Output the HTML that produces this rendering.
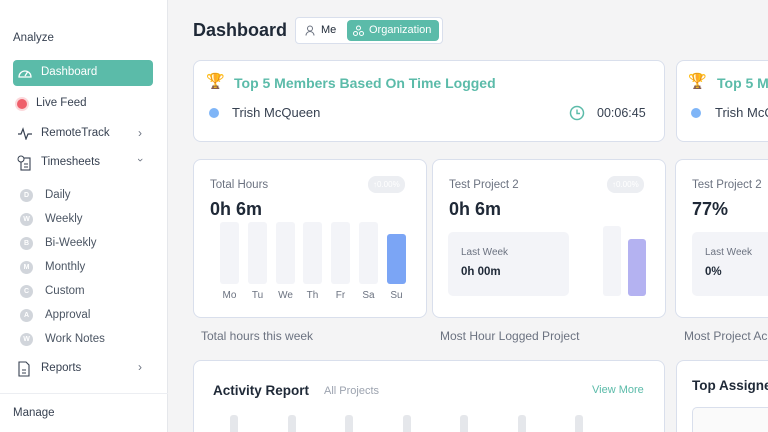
<!DOCTYPE html>
<html style="overflow:hidden;width:768px;height:432px"><head><meta charset="utf-8"><style>
*{box-sizing:border-box;margin:0;padding:0}
html,body{overflow:hidden}
body{width:768px;height:432px;background:#f4f4f5;font-family:"Liberation Sans",sans-serif;position:relative;color:#1f2937}
.abs{position:absolute;white-space:nowrap}
.sb{left:0;top:0;width:168px;height:432px;background:#fff;border-right:1px solid #e5e7eb}
.sec{font-size:11.5px;color:#374151;left:13px}
.item{left:41px;font-size:11.5px;color:#374151}
.sub{left:45px;font-size:11.5px;color:#4b5563}
.dot{left:20px;width:13px;height:13px;border-radius:50%;background:#d1d5db;color:#fff;font-size:7px;text-align:center;line-height:13px;font-weight:bold}
.card{background:#fff;border:1px solid #d9dfec;border-radius:8px}
.bar{width:19px;background:#f3f4f8;border-radius:3px;top:222px;height:62px}
.day{font-size:10px;color:#6b7280;top:290px;width:19px;text-align:center}
.pill{background:#eceef2;border-radius:8px;color:#fff;font-size:8px;padding:4px 5px}
</style></head><body>
<div class="abs sb"></div>
<div class="abs sec" style="top:32px">Analyze</div>
<div class="abs" style="left:13px;top:60px;width:140px;height:26px;background:#5bbba9;border-radius:4px"></div>
<svg class="abs" style="left:17px;top:66px" width="16" height="13" viewBox="0 0 16 13"><path d="M2 11A6 6 0 1 1 14 11Z" fill="none" stroke="#fff" stroke-width="1.3"/><path d="M8 10L10.5 6" stroke="#fff" stroke-width="1.3"/></svg>
<div class="abs item" style="top:66px;color:#fff">Dashboard</div>
<div class="abs" style="left:17px;top:99px;width:10px;height:10px;border-radius:50%;background:#ef5f6b;box-shadow:0 0 0 2px #fcd9dc"></div>
<div class="abs item" style="top:97px;left:36px">Live Feed</div>
<svg class="abs" style="left:17px;top:127px" width="16" height="13"><path d="M1 7H4L6 2L9 12L11 7H15" fill="none" stroke="#374151" stroke-width="1.2"/></svg>
<div class="abs item" style="top:127px">RemoteTrack</div>
<div class="abs" style="left:138px;top:126px;color:#6b7280;font-size:12px">›</div>
<svg class="abs" style="left:17px;top:155px" width="14" height="16"><rect x="4" y="3" width="9" height="12" fill="none" stroke="#374151" stroke-width="1.1"/><circle cx="4" cy="4" r="3" fill="#fff" stroke="#374151"/><path d="M7 9H11M7 12H11" stroke="#374151"/></svg>
<div class="abs item" style="top:156px">Timesheets</div>
<div class="abs" style="left:138px;top:154px;color:#6b7280;font-size:11px;transform:rotate(90deg)">›</div>
<div class="abs dot" style="top:189px">D</div><div class="abs sub" style="top:189px">Daily</div>
<div class="abs dot" style="top:213px">W</div><div class="abs sub" style="top:213px">Weekly</div>
<div class="abs dot" style="top:237px">B</div><div class="abs sub" style="top:237px">Bi-Weekly</div>
<div class="abs dot" style="top:261px">M</div><div class="abs sub" style="top:261px">Monthly</div>
<div class="abs dot" style="top:285px">C</div><div class="abs sub" style="top:285px">Custom</div>
<div class="abs dot" style="top:309px">A</div><div class="abs sub" style="top:309px">Approval</div>
<div class="abs dot" style="top:333px">W</div><div class="abs sub" style="top:333px">Work Notes</div>
<svg class="abs" style="left:17px;top:361px" width="14" height="16"><path d="M2 1H9L12 4V15H2Z" fill="none" stroke="#374151" stroke-width="1.1"/><path d="M5 9H9M5 12H9" stroke="#374151"/></svg>
<div class="abs item" style="top:362px">Reports</div>
<div class="abs" style="left:138px;top:360px;color:#6b7280;font-size:12px">›</div>
<div class="abs" style="left:0;top:393px;width:168px;border-top:1px solid #eceef2"></div>
<div class="abs sec" style="top:407px">Manage</div>

<div class="abs" style="left:193px;top:20px;font-size:18px;font-weight:bold;color:#1f2937">Dashboard</div>
<div class="abs" style="left:295px;top:17px;width:148px;height:27px;background:#fff;border:1px solid #d9dfec;border-radius:4px"></div>
<svg class="abs" style="left:305px;top:25px" width="10" height="11"><circle cx="5" cy="3.5" r="2.5" fill="none" stroke="#6b7280"/><path d="M1 10.5A4 4 0 0 1 9 10.5" fill="none" stroke="#6b7280"/></svg>
<div class="abs" style="left:321px;top:24px;font-size:11px;color:#1f2937">Me</div>
<div class="abs" style="left:347px;top:20px;width:92px;height:21px;background:#5bbba9;border-radius:4px"></div>
<svg class="abs" style="left:353px;top:25px" width="11" height="11"><circle cx="5.5" cy="3" r="2" fill="none" stroke="#fff"/><circle cx="2.5" cy="8.5" r="2" fill="none" stroke="#fff"/><circle cx="8.5" cy="8.5" r="2" fill="none" stroke="#fff"/></svg>
<div class="abs" style="left:369px;top:24px;font-size:11px;color:#fff">Organization</div>

<div class="abs card" style="left:193px;top:60px;width:472px;height:82px"></div>
<div class="abs" style="left:206px;top:72px;font-size:15px">🏆</div>
<div class="abs" style="left:234px;top:75px;font-size:14px;font-weight:bold;color:#5bbba9">Top 5 Members Based On Time Logged</div>
<div class="abs" style="left:209px;top:108px;width:10px;height:10px;border-radius:50%;background:#7fb5f7"></div>
<div class="abs" style="left:232px;top:105px;font-size:13px;color:#374151">Trish McQueen</div>
<svg class="abs" style="left:569px;top:105px" width="16" height="16"><circle cx="8" cy="8" r="6.5" fill="none" stroke="#5bbba9" stroke-width="1.5"/><path d="M8 4.5V8.5H11" fill="none" stroke="#5bbba9" stroke-width="1.4"/></svg>
<div class="abs" style="left:597px;top:106px;font-size:12.5px;color:#374151">00:06:45</div>
<div class="abs card" style="left:676px;top:60px;width:120px;height:82px"></div>
<div class="abs" style="left:688px;top:72px;font-size:15px">🏆</div>
<div class="abs" style="left:717px;top:75px;font-size:14px;font-weight:bold;color:#5bbba9">Top 5 Members</div>
<div class="abs" style="left:691px;top:108px;width:10px;height:10px;border-radius:50%;background:#7fb5f7"></div>
<div class="abs" style="left:715px;top:105px;font-size:13px;color:#374151">Trish McQueen</div>

<div class="abs card" style="left:193px;top:159px;width:234px;height:159px"></div>
<div class="abs" style="left:210px;top:179px;font-size:11.5px;color:#6b7280">Total Hours</div>
<div class="abs pill" style="left:368px;top:176px">↑0.00%</div>
<div class="abs" style="left:210px;top:199px;font-size:18px;font-weight:bold">0h 6m</div>
<div class="abs bar" style="left:220px"></div><div class="abs bar" style="left:248px"></div><div class="abs bar" style="left:276px"></div><div class="abs bar" style="left:303px"></div><div class="abs bar" style="left:331px"></div><div class="abs bar" style="left:359px"></div>
<div class="abs bar" style="left:387px;top:234px;height:50px;background:#7ba5f5"></div>
<div class="abs day" style="left:220px">Mo</div><div class="abs day" style="left:248px">Tu</div><div class="abs day" style="left:276px">We</div><div class="abs day" style="left:303px">Th</div><div class="abs day" style="left:331px">Fr</div><div class="abs day" style="left:359px">Sa</div><div class="abs day" style="left:387px">Su</div>
<div class="abs" style="left:201px;top:329px;font-size:12px;color:#6b7280">Total hours this week</div>

<div class="abs card" style="left:432px;top:159px;width:234px;height:159px"></div>
<div class="abs" style="left:449px;top:179px;font-size:11.5px;color:#6b7280">Test Project 2</div>
<div class="abs pill" style="left:607px;top:176px">↑0.00%</div>
<div class="abs" style="left:449px;top:199px;font-size:18px;font-weight:bold">0h 6m</div>
<div class="abs" style="left:448px;top:232px;width:121px;height:64px;background:#f3f4f8;border-radius:5px"></div>
<div class="abs" style="left:461px;top:247px;font-size:10px;color:#6b7280">Last Week</div>
<div class="abs" style="left:461px;top:266px;font-size:11.5px;font-weight:bold">0h 00m</div>
<div class="abs" style="left:603px;top:226px;width:18px;height:70px;background:#f3f4f8;border-radius:3px"></div>
<div class="abs" style="left:628px;top:239px;width:18px;height:57px;background:#b4b2f1;border-radius:3px"></div>
<div class="abs" style="left:440px;top:329px;font-size:12px;color:#6b7280">Most Hour Logged Project</div>

<div class="abs card" style="left:675px;top:159px;width:120px;height:159px"></div>
<div class="abs" style="left:692px;top:179px;font-size:11.5px;color:#6b7280">Test Project 2</div>
<div class="abs" style="left:692px;top:199px;font-size:18px;font-weight:bold">77%</div>
<div class="abs" style="left:692px;top:232px;width:100px;height:64px;background:#f3f4f8;border-radius:5px"></div>
<div class="abs" style="left:705px;top:247px;font-size:10px;color:#6b7280">Last Week</div>
<div class="abs" style="left:705px;top:266px;font-size:11.5px;font-weight:bold">0%</div>
<div class="abs" style="left:684px;top:329px;font-size:12px;color:#6b7280">Most Project Ac</div>

<div class="abs card" style="left:193px;top:360px;width:472px;height:80px"></div>
<div class="abs" style="left:213px;top:383px;font-size:13.5px;font-weight:bold;color:#1f2937">Activity Report</div>
<div class="abs" style="left:324px;top:385px;font-size:11px;color:#9ca3af">All Projects</div>
<div class="abs" style="left:592px;top:384px;font-size:11px;color:#5bbba9">View More</div>
<div class="abs" style="left:230px;top:415px;width:8px;height:17px;background:#e5e7eb;border-radius:3px 3px 0 0"></div>
<div class="abs" style="left:288px;top:415px;width:8px;height:17px;background:#e5e7eb;border-radius:3px 3px 0 0"></div>
<div class="abs" style="left:345px;top:415px;width:8px;height:17px;background:#e5e7eb;border-radius:3px 3px 0 0"></div>
<div class="abs" style="left:403px;top:415px;width:8px;height:17px;background:#e5e7eb;border-radius:3px 3px 0 0"></div>
<div class="abs" style="left:460px;top:415px;width:8px;height:17px;background:#e5e7eb;border-radius:3px 3px 0 0"></div>
<div class="abs" style="left:518px;top:415px;width:8px;height:17px;background:#e5e7eb;border-radius:3px 3px 0 0"></div>
<div class="abs" style="left:575px;top:415px;width:8px;height:17px;background:#e5e7eb;border-radius:3px 3px 0 0"></div>
<div class="abs card" style="left:676px;top:360px;width:92px;height:80px;border-right:none;border-radius:8px 0 0 8px"></div>
<div class="abs" style="left:692px;top:378px;font-size:13.5px;font-weight:bold">Top Assigne</div>
<div class="abs" style="left:692px;top:407px;width:76px;height:30px;border:1px solid #d9dfec;border-right:none;border-radius:5px 0 0 0;background:#fafafa"></div>
</body></html>
